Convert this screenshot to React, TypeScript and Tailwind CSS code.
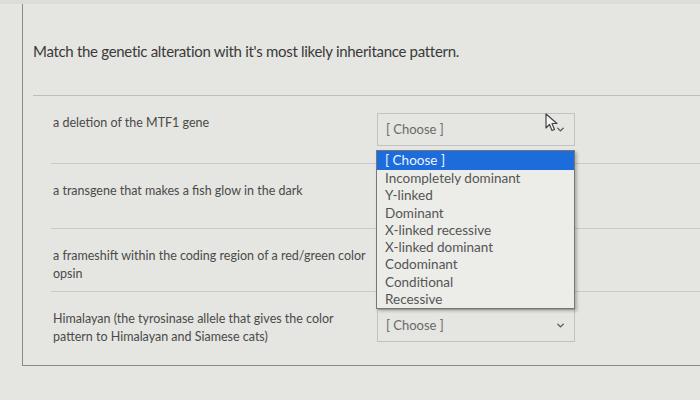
import { ChevronDown } from "lucide-react";

const options = [
  "Incompletely dominant",
  "Y-linked",
  "Dominant",
  "X-linked recessive",
  "X-linked dominant",
  "Codominant",
  "Conditional",
  "Recessive",
];

const rows = [
  { label: ["a deletion of the MTF1 gene"], h: "h-[68px]", showSelect: true },
  { label: ["a transgene that makes a fish glow in the dark"], h: "h-[65px]", showSelect: false },
  { label: ["a frameshift within the coding region of a red/green color", "opsin"], h: "h-[63px]", showSelect: false },
  {
    label: ["Himalayan (the tyrosinase allele that gives the color", "pattern to Himalayan and Siamese cats)"],
    h: "h-[75px]",
    showSelect: true,
  },
];

function Select() {
  return (
    <div className="mt-[17px] w-[198px] h-[33px] border border-[#c2c2be] flex items-center justify-between pl-[8px] pr-[8px] text-[13px] text-[#6a6a6a]">
      <span>[ Choose ]</span>
      <ChevronDown className="w-[11px] h-[11px] text-[#555]" strokeWidth={3} />
    </div>
  );
}

function Cursor() {
  return (
    <svg width="14" height="20" viewBox="0 0 14 20" className="absolute left-[545px] top-[113px]">
      <path d="M1 1 L1 15 L4.5 11.5 L7 17.5 L9.5 16.5 L7 10.5 L12 10.5 Z" fill="#f4f4f2" stroke="#444" strokeWidth="1.2" strokeLinejoin="round" />
    </svg>
  );
}

export default function App() {
  return (
    <div
      className="relative w-[700px] h-[400px] overflow-hidden bg-[#e5e5e1] text-[#444]"
      style={{ fontFamily: "Lato, 'Open Sans', sans-serif" }}
    >
      <div className="h-[4px] bg-[#dcdcd8]" />
      <div className="ml-[22px] h-[362px] border-l border-b border-[#8a8a86]">
        <div className="h-[91px] flex items-center pl-[10px] pt-[4px]">
          <h1 className="text-[15px] text-[#3a3a3a] tracking-[-0.3px]">
            Match the genetic alteration with it's most likely inheritance pattern.
          </h1>
        </div>
        <div className="ml-[10px] border-t border-[#bdbdb9]" />
        <div className="ml-[28px]">
          {rows.map((row, i) => (
            <div
              key={i}
              className={`${row.h} flex ${i < rows.length - 1 ? "border-b border-[#c9c9c5]" : ""}`}
            >
              <div className="w-[326px] pl-[2px] pt-[18px] text-[12.5px] leading-[18px] text-[#4a4a4a]">
                {row.label.map((l, j) => (
                  <div key={j} className="whitespace-nowrap">
                    {l}
                  </div>
                ))}
              </div>
              {row.showSelect && <Select />}
            </div>
          ))}
        </div>
      </div>

      <div className="absolute left-[376px] top-[150px] w-[199px] border border-[#777] bg-[#ececE8] shadow-[2px_2px_3px_rgba(0,0,0,0.25)] text-[13.5px] leading-[17.3px] text-[#555]">
        <div className="bg-[#1c6ddb] text-[#eef3ff] pl-[8px] h-[19px] flex items-center">[ Choose ]</div>
        {options.map((o) => (
          <div key={o} className="pl-[8px]">
            {o}
          </div>
        ))}
      </div>

      <Cursor />
    </div>
  );
}
